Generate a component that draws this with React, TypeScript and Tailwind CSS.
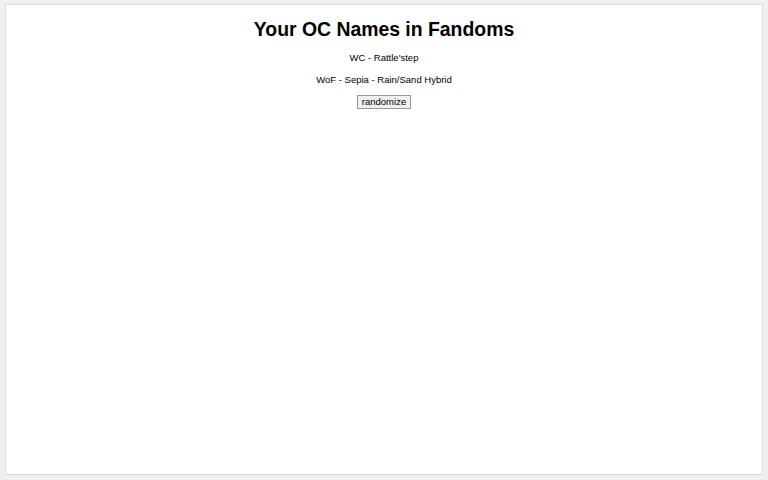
export default function App() {
  return (
    <div className="min-h-[480px] bg-[#f0f0f0] p-[4px_5px_5px_5px]" style={{ fontFamily: '"Liberation Sans", Arial, sans-serif' }}>
      <div className="h-[471px] border border-[#dcdcdc] bg-white text-center text-black">
        <h1 className="pt-[10px] text-[19.4px] font-bold leading-[28px]">Your OC Names in Fandoms</h1>
        <p className="mt-[9px] text-[9.5px] leading-[12px]">WC - Rattle&apos;step</p>
        <p className="mt-[10px] text-[9.5px] leading-[12px]">WoF - Sepia - Rain/Sand Hybrid</p>
        <button className="mt-[9px] h-[14px] border border-[#999999] bg-[#efefef] px-[4px] text-[9.5px] leading-[12px]">
          randomize
        </button>
      </div>
    </div>
  );
}
